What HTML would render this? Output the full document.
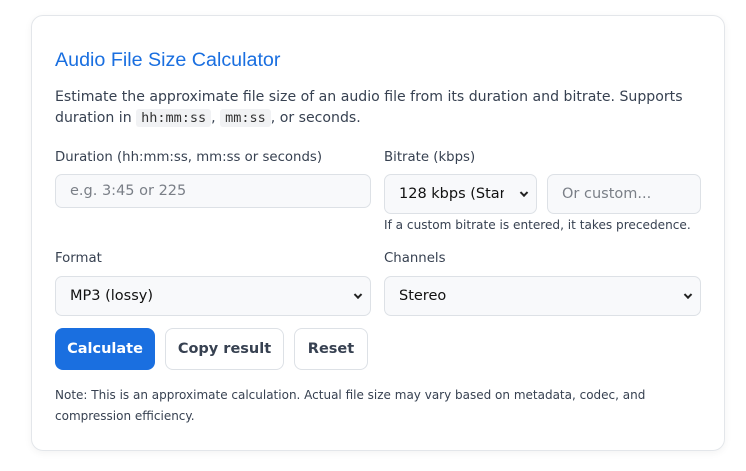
<!DOCTYPE html>
<html><head><style>
*{box-sizing:border-box;margin:0;padding:0}
body{width:746px;height:471px;background:#fff;font-family:"DejaVu Sans",sans-serif;position:relative;overflow:hidden}
.card{position:absolute;left:31px;top:15px;width:694px;height:436px;border:1px solid #e3e6ea;border-radius:12px;box-shadow:0 2px 8px rgba(0,0,0,0.05)}
.a{position:absolute;white-space:nowrap}
h1{position:absolute;left:55px;top:49px;font-size:19.7px;font-weight:normal;color:#1a6fe0;font-family:"Liberation Sans",sans-serif}
.d{font-size:14.1px;color:#374151;line-height:21px}
code{font-family:"DejaVu Sans Mono",monospace;background:#f1f2f4;padding:1px 5px;border-radius:3px;font-size:13.5px;color:#333}
.l{font-size:13.3px;color:#374151}
.box{position:absolute;border:1px solid #dde1e6;border-radius:7px;background:#f8f9fb;font-size:14.5px;display:flex;align-items:center;padding-left:14px;white-space:nowrap}
.ph{color:#7a7f87}
.sel{color:#111}
.clip{display:block;width:105px;overflow:hidden}
.chev{position:absolute;right:9px;top:50%;width:6px;height:6px;border-right:2px solid #222;border-bottom:2px solid #222;transform:translateY(-70%) rotate(45deg)}
.btn{position:absolute;top:328px;height:42px;border-radius:8px;font-size:14.5px;font-weight:bold;display:flex;align-items:center;justify-content:center}
.s{border:1px solid #dde1e6;background:#fff;color:#374151}
.n{font-size:12px;color:#374151;line-height:21px}
</style></head><body>
<div class="card"></div>
<h1>Audio File Size Calculator</h1>
<div class="a d" style="left:55px;top:87px">Estimate the approximate file size of an audio file from its duration and bitrate. Supports<br>duration in <code>hh:mm:ss</code>, <code>mm:ss</code>, or seconds.</div>
<div class="a l" style="left:55px;top:150px">Duration (hh:mm:ss, mm:ss or seconds)</div>
<div class="a l" style="left:384px;top:150px">Bitrate (kbps)</div>
<div class="box ph" style="left:55px;top:174px;width:316px;height:34px">e.g. 3:45 or 225</div>
<div class="box sel" style="left:384px;top:174px;width:153px;height:40px"><span class="clip">128 kbps (Standard)</span><span class="chev"></span></div>
<div class="box ph" style="left:547px;top:174px;width:154px;height:40px">Or custom...</div>
<div class="a" style="left:384px;top:218px;font-size:12.1px;color:#374151">If a custom bitrate is entered, it takes precedence.</div>
<div class="a l" style="left:55px;top:251px">Format</div>
<div class="a l" style="left:384px;top:251px">Channels</div>
<div class="box sel" style="left:55px;top:276px;width:316px;height:40px">MP3 (lossy)<span class="chev"></span></div>
<div class="box sel" style="left:384px;top:276px;width:317px;height:40px">Stereo<span class="chev"></span></div>
<div class="btn" style="left:55px;width:100px;background:#1a6fe0;color:#fff">Calculate</div>
<div class="btn s" style="left:165px;width:119px">Copy result</div>
<div class="btn s" style="left:294px;width:74px">Reset</div>
<div class="a n" style="left:55px;top:385px">Note: This is an approximate calculation. Actual file size may vary based on metadata, codec, and<br>compression efficiency.</div>
</body></html>
